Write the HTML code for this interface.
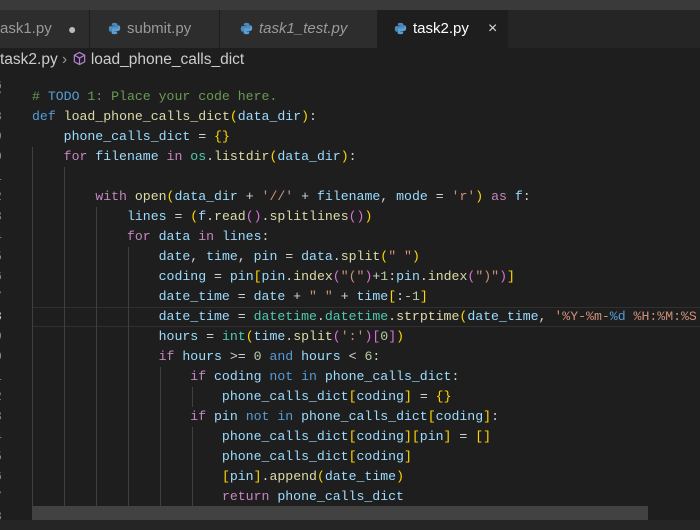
<!DOCTYPE html>
<html><head><meta charset="utf-8"><style>
*{margin:0;padding:0;box-sizing:border-box}
body{width:700px;height:530px;overflow:hidden;background:#1e1e1e;position:relative;font-family:"Liberation Sans",sans-serif}
.top{position:absolute;left:0;top:0;width:700px;height:10px;background:#3a3a3a}
.tabs{position:absolute;left:0;top:10px;width:700px;height:38px;background:#252526}
.tab{position:absolute;top:0;height:38px;line-height:38px;font-size:15px;color:#9a9a9a;border-right:1px solid #1e1e1e;background:#2d2d2d}
.tab.act{background:#1e1e1e;color:#fff}
.ico{display:inline-block;vertical-align:-2px;margin-right:6px}
.bc{position:absolute;left:0;top:48px;height:24px;width:700px;line-height:24px;font-size:15.5px;color:#cccccc;background:#1e1e1e}
.code{position:absolute;left:0;top:0;width:700px;height:530px;font-family:"Liberation Mono",monospace;font-size:13.2px}
.ln{position:absolute;left:-6px;color:#858585;line-height:20px}
.l{position:absolute;left:32px;white-space:pre;color:#9cdcfe;line-height:20px}
.g{position:absolute;width:1px;background:#404040}
.k{color:#c586c0}.d{color:#569cd6}.f{color:#dcdcaa}.s{color:#ce9178}.n{color:#b5cea8}.c{color:#6a9955}.t{color:#4ec9b0}.w{color:#d4d4d4}
.b1{color:#ffd700}.b2{color:#da70d6}.b3{color:#179fff}
.hl{position:absolute;left:32px;top:307px;width:668px;height:20px;border-top:1px solid #303030;border-bottom:1px solid #303030}
.sb{position:absolute;left:32px;top:506px;width:616px;height:14px;background:#424242}
.bot{position:absolute;left:0;top:520px;width:700px;height:10px;background:#252526}
</style></head><body>
<div class="top"></div>
<div class="tabs">
 <div class="tab" style="left:0;width:90px;padding-left:0">ask1.py<span style="position:absolute;left:68px;top:0;color:#bbb;font-size:14px">●</span></div>
 <div class="tab" style="left:90px;width:130px;padding-left:18px"><svg class="ico" width="13" height="13" viewBox="0 0 16 16"><path d="M8 1C4.5 1 4.7 2.5 4.7 2.5V4.5H8.1V5H3.3S1 4.8 1 8.4s2 3.4 2 3.4h1.2V10.1S4.1 8.1 6.2 8.1h3.4s2 0 2-1.9V3S11.9 1 8 1z" fill="#4b8bbe"/><path d="M8 15c3.5 0 3.3-1.5 3.3-1.5V11.5H7.9V11h4.8S15 11.2 15 7.6s-2-3.4-2-3.4h-1.2v1.7s.1 2-2 2H6.4s-2 0-2 1.9V13S4.1 15 8 15z" fill="#5a9fd4"/></svg>submit.py</div>
 <div class="tab" style="left:220px;width:158px;padding-left:20px;font-style:italic"><svg class="ico" width="13" height="13" viewBox="0 0 16 16"><path d="M8 1C4.5 1 4.7 2.5 4.7 2.5V4.5H8.1V5H3.3S1 4.8 1 8.4s2 3.4 2 3.4h1.2V10.1S4.1 8.1 6.2 8.1h3.4s2 0 2-1.9V3S11.9 1 8 1z" fill="#4b8bbe"/><path d="M8 15c3.5 0 3.3-1.5 3.3-1.5V11.5H7.9V11h4.8S15 11.2 15 7.6s-2-3.4-2-3.4h-1.2v1.7s.1 2-2 2H6.4s-2 0-2 1.9V13S4.1 15 8 15z" fill="#5a9fd4"/></svg>task1_test.py</div>
 <div class="tab act" style="left:378px;width:130px;padding-left:16px"><svg class="ico" width="13" height="13" viewBox="0 0 16 16"><path d="M8 1C4.5 1 4.7 2.5 4.7 2.5V4.5H8.1V5H3.3S1 4.8 1 8.4s2 3.4 2 3.4h1.2V10.1S4.1 8.1 6.2 8.1h3.4s2 0 2-1.9V3S11.9 1 8 1z" fill="#4b8bbe"/><path d="M8 15c3.5 0 3.3-1.5 3.3-1.5V11.5H7.9V11h4.8S15 11.2 15 7.6s-2-3.4-2-3.4h-1.2v1.7s.1 2-2 2H6.4s-2 0-2 1.9V13S4.1 15 8 15z" fill="#5a9fd4"/></svg>task2.py<span style="position:absolute;left:110px;color:#ddd;font-size:16px">×</span></div>
</div>
<div class="bc">task2.py <span style="color:#999">›</span> <svg width="15" height="15" viewBox="0 0 16 16" style="vertical-align:-2px"><path d="M8 1.5l5.5 3v7L8 14.5 2.5 11.5v-7z M2.5 4.5L8 7.5l5.5-3 M8 7.5v7" fill="none" stroke="#b180d7" stroke-width="1.3"/></svg> load_phone_calls_dict</div>
<div class="code">
<div class="hl"></div>
<div class="g" style="left:32px;top:147px;height:360px"></div>
<div class="g" style="left:64px;top:167px;height:340px"></div>
<div class="g" style="left:96px;top:207px;height:300px"></div>
<div class="g" style="left:128px;top:247px;height:260px"></div>
<div class="g" style="left:160px;top:367px;height:140px"></div>
<div class="g" style="left:192px;top:387px;height:20px"></div>
<div class="g" style="left:192px;top:427px;height:80px"></div>
<div class="ln" style="top:76px">6</div>
<div class="ln" style="top:87px">7</div><div class="ln" style="top:107px">8</div><div class="ln" style="top:127px">9</div><div class="ln" style="top:147px">0</div><div class="ln" style="top:167px">1</div><div class="ln" style="top:187px">2</div><div class="ln" style="top:207px">3</div><div class="ln" style="top:227px">4</div><div class="ln" style="top:247px">5</div><div class="ln" style="top:267px">6</div><div class="ln" style="top:287px">7</div><div class="ln" style="top:307px;color:#ccc">8</div><div class="ln" style="top:327px">9</div><div class="ln" style="top:347px">0</div><div class="ln" style="top:367px">1</div><div class="ln" style="top:387px">2</div><div class="ln" style="top:407px">3</div><div class="ln" style="top:427px">4</div><div class="ln" style="top:447px">5</div><div class="ln" style="top:467px">6</div><div class="ln" style="top:487px">7</div><div class="ln" style="top:507px">8</div>
<div class="l" style="top:87px"><span class="c"># <span class="d">TODO</span> 1: Place your code here.</span></div>
<div class="l" style="top:107px"><span class="d">def</span> <span class="f">load_phone_calls_dict</span><span class="b1">(</span>data_dir<span class="b1">)</span><span class="w">:</span></div>
<div class="l" style="top:127px">    phone_calls_dict <span class="w">=</span> <span class="b1">{}</span></div>
<div class="l" style="top:147px">    <span class="k">for</span> filename <span class="k">in</span> <span class="t">os</span><span class="w">.</span><span class="f">listdir</span><span class="b1">(</span>data_dir<span class="b1">)</span><span class="w">:</span></div>
<div class="l" style="top:187px">        <span class="k">with</span> <span class="f">open</span><span class="b1">(</span>data_dir <span class="w">+</span> <span class="s">'//'</span> <span class="w">+</span> filename<span class="w">,</span> mode <span class="w">=</span> <span class="s">'r'</span><span class="b1">)</span> <span class="k">as</span> f<span class="w">:</span></div>
<div class="l" style="top:207px">            lines <span class="w">=</span> <span class="b1">(</span>f<span class="w">.</span><span class="f">read</span><span class="b2">()</span><span class="w">.</span><span class="f">splitlines</span><span class="b2">()</span><span class="b1">)</span></div>
<div class="l" style="top:227px">            <span class="k">for</span> data <span class="k">in</span> lines<span class="w">:</span></div>
<div class="l" style="top:247px">                date<span class="w">,</span> time<span class="w">,</span> pin <span class="w">=</span> data<span class="w">.</span><span class="f">split</span><span class="b1">(</span><span class="s">" "</span><span class="b1">)</span></div>
<div class="l" style="top:267px">                coding <span class="w">=</span> pin<span class="b1">[</span>pin<span class="w">.</span><span class="f">index</span><span class="b2">(</span><span class="s">"("</span><span class="b2">)</span><span class="w">+</span><span class="n">1</span><span class="w">:</span>pin<span class="w">.</span><span class="f">index</span><span class="b2">(</span><span class="s">")"</span><span class="b2">)</span><span class="b1">]</span></div>
<div class="l" style="top:287px">                date_time <span class="w">=</span> date <span class="w">+</span> <span class="s">" "</span> <span class="w">+</span> time<span class="b1">[</span><span class="w">:</span><span class="n">-1</span><span class="b1">]</span></div>
<div class="l" style="top:307px">                date_time <span class="w">=</span> <span class="t">datetime</span><span class="w">.</span><span class="t">datetime</span><span class="w">.</span><span class="f">strptime</span><span class="b1">(</span>date_time<span class="w">,</span> <span class="s">'%Y-%m-<span class="d">%d</span> %H:%M:%S'</span></div>
<div class="l" style="top:327px">                hours <span class="w">=</span> <span class="t">int</span><span class="b1">(</span>time<span class="w">.</span><span class="f">split</span><span class="b2">(</span><span class="s">':'</span><span class="b2">)</span><span class="b2">[</span><span class="n">0</span><span class="b2">]</span><span class="b1">)</span></div>
<div class="l" style="top:347px">                <span class="k">if</span> hours <span class="w">&gt;=</span> <span class="n">0</span> <span class="d">and</span> hours <span class="w">&lt;</span> <span class="n">6</span><span class="w">:</span></div>
<div class="l" style="top:367px">                    <span class="k">if</span> coding <span class="d">not</span> <span class="d">in</span> phone_calls_dict<span class="w">:</span></div>
<div class="l" style="top:387px">                        phone_calls_dict<span class="b1">[</span>coding<span class="b1">]</span> <span class="w">=</span> <span class="b1">{}</span></div>
<div class="l" style="top:407px">                    <span class="k">if</span> pin <span class="d">not</span> <span class="d">in</span> phone_calls_dict<span class="b1">[</span>coding<span class="b1">]</span><span class="w">:</span></div>
<div class="l" style="top:427px">                        phone_calls_dict<span class="b1">[</span>coding<span class="b1">][</span>pin<span class="b1">]</span> <span class="w">=</span> <span class="b1">[]</span></div>
<div class="l" style="top:447px">                        phone_calls_dict<span class="b1">[</span>coding<span class="b1">]</span></div>
<div class="l" style="top:467px">                        <span class="b1">[</span>pin<span class="b1">]</span><span class="w">.</span><span class="f">append</span><span class="b1">(</span>date_time<span class="b1">)</span></div>
<div class="l" style="top:487px">                        <span class="k">return</span> phone_calls_dict</div>
<div class="sb"></div>
</div>
<div class="bot"></div>
</body></html>
